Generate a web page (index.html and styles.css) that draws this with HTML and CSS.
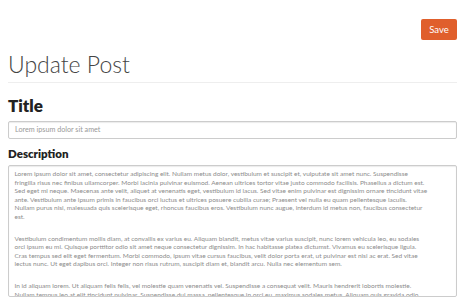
FILE: index.html
```html
<!DOCTYPE html>
<html>
<head>
<meta charset="utf-8">
<link rel="stylesheet" href="styles.css">
</head>
<body>
<div class="page">
  <div class="toolbar"><button class="btn-save">Save</button></div>
  <h1 class="page-title">Update Post</h1>
  <hr class="rule">
  <h2 class="field-title">Title</h2>
  <input class="text-input" type="text" placeholder="Lorem ipsum dolor sit amet">
  <h3 class="field-label">Description</h3>
  <div class="textarea">
    <p>Lorem ipsum dolor sit amet, consectetur adipiscing elit. Nullam metus dolor, vestibulum et suscipit et, vulputate sit amet nunc. Suspendisse<br>fringilla risus nec finibus ullamcorper. Morbi lacinia pulvinar euismod. Aenean ultrices tortor vitae justo commodo facilisis. Phasellus a dictum est.<br>Sed eget mi neque. Maecenas ante velit, aliquet at venenatis eget, vestibulum id lacus. Sed vitae enim pulvinar est dignissim ornare tincidunt vitae<br>ante. Vestibulum ante ipsum primis in faucibus orci luctus et ultrices posuere cubilia curae; Praesent vel nulla eu quam pellentesque iaculis.<br>Nullam purus nisi, malesuada quis scelerisque eget, rhoncus faucibus eros. Vestibulum nunc augue, interdum id metus non, faucibus consectetur<br>est.</p>
    <p>Vestibulum condimentum mollis diam, at convallis ex varius eu. Aliquam blandit, metus vitae varius suscipit, nunc lorem vehicula leo, eu sodales<br>orci ipsum eu mi. Quisque porttitor odio sit amet neque consectetur dignissim. In hac habitasse platea dictumst. Vivamus eu scelerisque ligula.<br>Cras tempus sed elit eget fermentum. Morbi commodo, ipsum vitae cursus faucibus, velit dolor porta erat, ut pulvinar est nisi ac erat. Sed vitae<br>lectus nunc. Ut eget dapibus orci. Integer non risus rutrum, suscipit diam et, blandit arcu. Nulla nec elementum sem.</p>
    <p>In id aliquam lorem. Ut aliquam felis felis, vel molestie quam venenatis vel. Suspendisse a consequat velit. Mauris hendrerit lobortis molestie.<br>Nullam tempus leo at elit tincidunt pulvinar. Suspendisse dui massa, pellentesque in orci eu, maximus sodales metus. Aliquam quis gravida odio.</p>
  </div>
</div>
</body>
</html>
```
FILE: styles.css
```css
html, body {
  margin: 0;
  padding: 0;
  background: #fff;
}
body {
  font-family: Lato, "Open Sans", sans-serif;
  color: #333;
}
.page {
  padding: 19px 17px 0 8px;
  display: flex;
  flex-direction: column;
}
.toolbar {
  display: flex;
  justify-content: flex-end;
}
.btn-save {
  width: 36px;
  height: 21px;
  padding: 0;
  border: none;
  border-radius: 2px;
  background: #e05f2c;
  color: #fff;
  font-family: Lato, sans-serif;
  font-size: 9.5px;
  line-height: 21px;
}
.page-title {
  margin: 10px 0 0 0;
  font-size: 23px;
  line-height: 29px;
  font-weight: 300;
  color: #444;
}
.rule {
  margin: 3px 0 0 0;
  border: none;
  border-top: 1px solid #eee;
  height: 0;
}
.field-title {
  margin: 12.7px 0 0 0;
  font-size: 17px;
  line-height: 20px;
  font-weight: 800;
  color: #222;
}
.text-input {
  margin: 5px 0 0 0;
  box-sizing: border-box;
  height: 18px;
  width: 100%;
  border: 1px solid #ccc;
  border-radius: 2px;
  box-shadow: inset 0 1px 1px rgba(0,0,0,0.08);
  padding: 0 6px;
  font-family: Lato, sans-serif;
  font-size: 7.2px;
  color: #999;
}
.text-input::placeholder {
  color: #999;
}
.field-label {
  margin: 8.6px 0 0 0;
  font-size: 11.5px;
  line-height: 14px;
  font-weight: 800;
  color: #222;
}
.textarea {
  margin-top: 4px;
  box-sizing: border-box;
  height: 132px;
  border: 1px solid #ccc;
  border-radius: 2px;
  box-shadow: inset 0 1px 1px rgba(0,0,0,0.08);
  padding: 3.7px 6px 0 5.5px;
  overflow: hidden;
  font-size: 6.5px;
  line-height: 8.6px;
  color: #8c8c8c;
  white-space: nowrap;
}
.textarea p {
  margin: 0 0 13px 0;
}
```
